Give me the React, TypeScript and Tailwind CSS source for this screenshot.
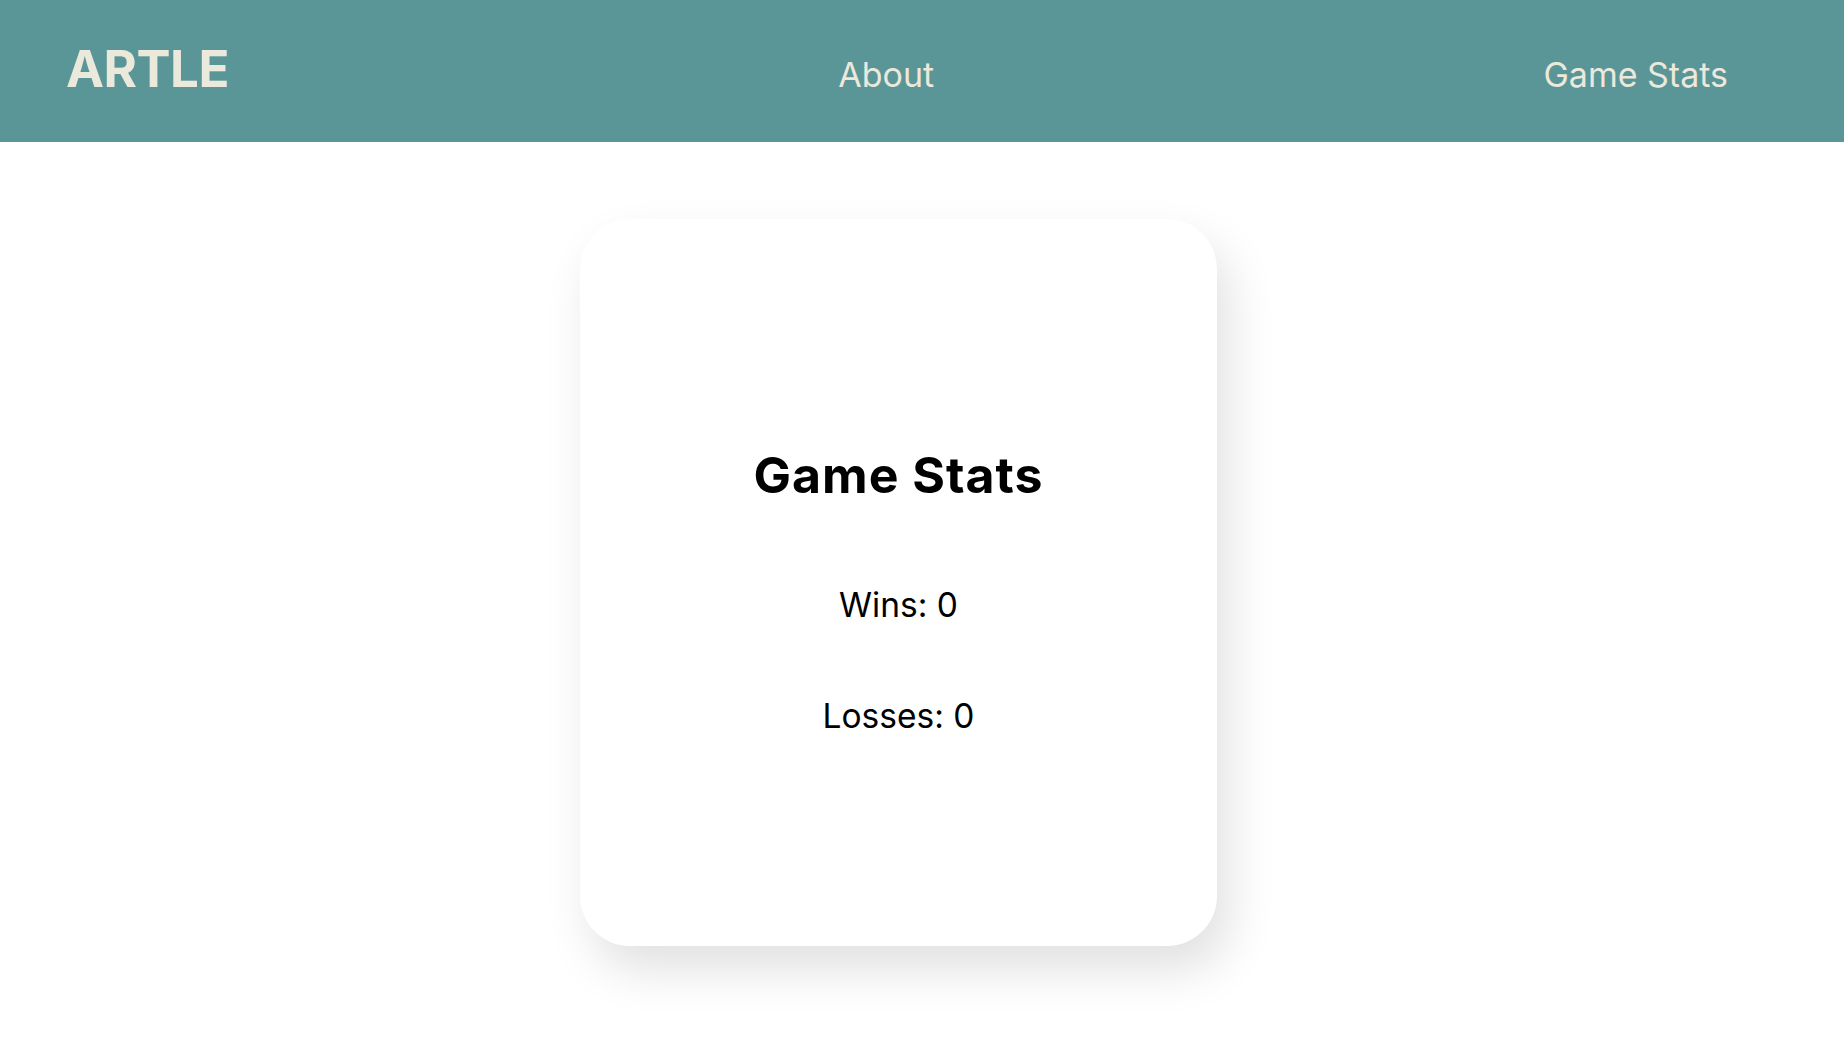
import React from 'react';

const NAV_TEXT = 'text-[#ebe8dc]';

const Header: React.FC = () => (
  <header className="flex h-[142px] items-baseline justify-between bg-[#5a9697] pl-[66px] pr-[116px] pt-[43px]">
    <h1 className={`text-[51px] font-bold leading-none tracking-[-0.5px] ${NAV_TEXT}`}>ARTLE</h1>
    <a className={`text-[34px] leading-none ${NAV_TEXT}`}>About</a>
    <a className={`text-[34px] leading-none ${NAV_TEXT}`}>Game Stats</a>
  </header>
);

const StatsCard: React.FC<{ wins: number; losses: number }> = ({ wins, losses }) => (
  <div className="flex h-[727px] w-[637px] flex-col items-center justify-center rounded-[50px] bg-white pt-[24px] text-black shadow-[12px_24px_48px_rgba(0,0,0,0.12)]">
    <h2 className="text-[50px] font-bold leading-none tracking-[1px]">Game Stats</h2>
    <p className="mt-[81px] text-[33.5px] leading-[48px]">Wins: {wins}</p>
    <p className="mt-[63px] text-[33.5px] leading-[48px]">Losses: {losses}</p>
  </div>
);

export default function App() {
  return (
    <div className="min-h-screen bg-white" style={{ fontFamily: 'Inter, "Noto Sans", sans-serif' }}>
      <Header />
      <main className="flex justify-center pr-[47px] pt-[77px]">
        <StatsCard wins={0} losses={0} />
      </main>
    </div>
  );
}
